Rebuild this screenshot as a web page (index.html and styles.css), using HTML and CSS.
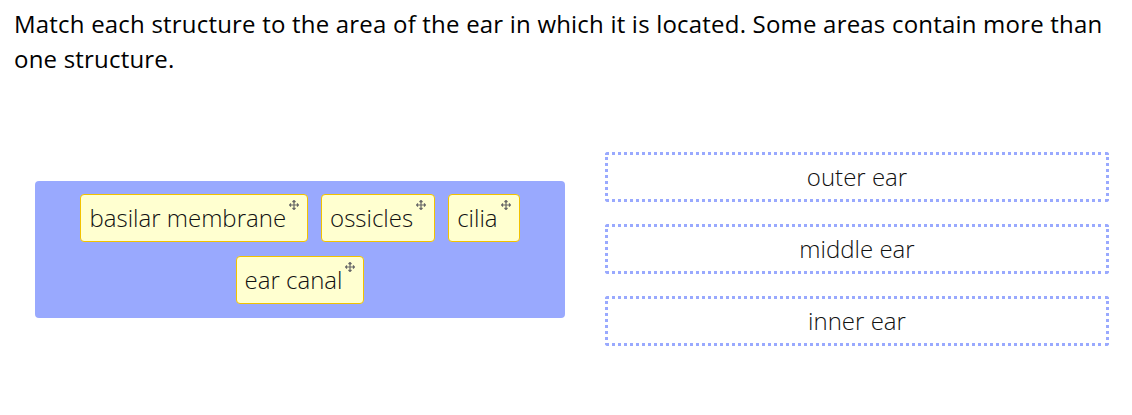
FILE: index.html
```html
<!DOCTYPE html>
<html lang="en">
<head>
<meta charset="UTF-8">
<title>Match the ear structures</title>
<link rel="stylesheet" href="styles.css">
</head>
<body>
<div class="question">Match each structure to the area of the ear in which it is located. Some areas contain more than one structure.</div>
<div class="board">
  <div class="pool">
    <div class="chip">basilar membrane<svg class="grip" viewBox="0 0 10 10"><path d="M5 0.5V9.5M0.5 5H9.5M3.5 2L5 0.5L6.5 2M3.5 8L5 9.5L6.5 8M2 3.5L0.5 5L2 6.5M8 3.5L9.5 5L8 6.5"/></svg></div>
    <div class="chip">ossicles<svg class="grip" viewBox="0 0 10 10"><path d="M5 0.5V9.5M0.5 5H9.5M3.5 2L5 0.5L6.5 2M3.5 8L5 9.5L6.5 8M2 3.5L0.5 5L2 6.5M8 3.5L9.5 5L8 6.5"/></svg></div>
    <div class="chip">cilia<svg class="grip" viewBox="0 0 10 10"><path d="M5 0.5V9.5M0.5 5H9.5M3.5 2L5 0.5L6.5 2M3.5 8L5 9.5L6.5 8M2 3.5L0.5 5L2 6.5M8 3.5L9.5 5L8 6.5"/></svg></div>
    <div class="chip">ear canal<svg class="grip" viewBox="0 0 10 10"><path d="M5 0.5V9.5M0.5 5H9.5M3.5 2L5 0.5L6.5 2M3.5 8L5 9.5L6.5 8M2 3.5L0.5 5L2 6.5M8 3.5L9.5 5L8 6.5"/></svg></div>
  </div>
  <div class="zones">
    <div class="zone">outer ear</div>
    <div class="zone">middle ear</div>
    <div class="zone">inner ear</div>
  </div>
</div>
</body>
</html>
```

FILE: styles.css
```css
*{margin:0;padding:0;box-sizing:border-box}
body{background:#fff;font-family:'Open Sans','Noto Sans',sans-serif;color:#000;padding:6px 14px 0 14px}
.question{font-size:24px;line-height:35px;letter-spacing:0.2px;max-width:1104px}
.board{display:flex;align-items:flex-start;margin-top:76px}
.pool{width:530px;margin-left:21px;margin-top:29px;background:#99a9fe;border-radius:4px;padding:13px 20px 14px;display:flex;flex-wrap:wrap;justify-content:center;gap:14px 13px}
.chip{position:relative;height:48px;background:#ffffd0;border:1px solid #f2c200;border-radius:4px;padding:0 21px 0 8px;font-size:24px;font-weight:300;line-height:46px;color:#111}
.grip{position:absolute;top:5px;right:8px;width:10px;height:10px;fill:none;stroke:#666;stroke-width:1.2}
.zones{margin-left:40px;width:504px;display:flex;flex-direction:column;gap:22px}
.zone{height:50px;border:3px dotted #99a9fe;border-radius:3px;text-align:center;font-size:24px;font-weight:300;line-height:44px;color:#111}
```
